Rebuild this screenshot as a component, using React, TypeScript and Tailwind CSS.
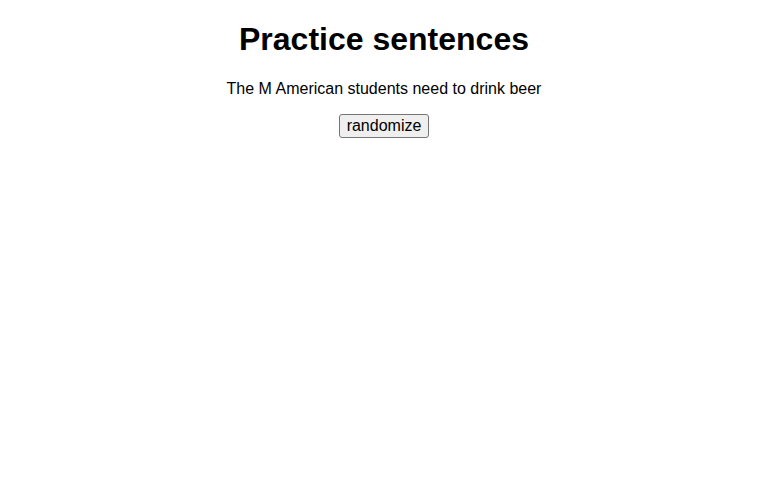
import React, { useState } from "react";

const subjects = ["The M American students", "The young teachers", "My French friends"];
const verbs = ["need to drink beer", "want to eat pizza", "like to read books"];

export default function App() {
  const [sentence, setSentence] = useState("The M American students need to drink beer");

  const randomize = () => {
    const s = subjects[Math.floor(Math.random() * subjects.length)];
    const v = verbs[Math.floor(Math.random() * verbs.length)];
    setSentence(`${s} ${v}`);
  };

  return (
    <div className="min-h-[480px] bg-white text-black text-center" style={{ fontFamily: '"Liberation Sans", Arial, sans-serif' }}>
      <h1 className="text-[32px] leading-[37px] font-bold pt-[21px] mb-[22px]">Practice sentences</h1>
      <p className="text-[16px] leading-[18px] mb-[16px]">{sentence}</p>
      <button
        onClick={randomize}
        className="h-[24px] px-[7px] text-[16px] leading-[18px] bg-[#efefef] border border-[#767676] rounded-[3px] hover:bg-[#e5e5e5]"
      >
        randomize
      </button>
    </div>
  );
}
